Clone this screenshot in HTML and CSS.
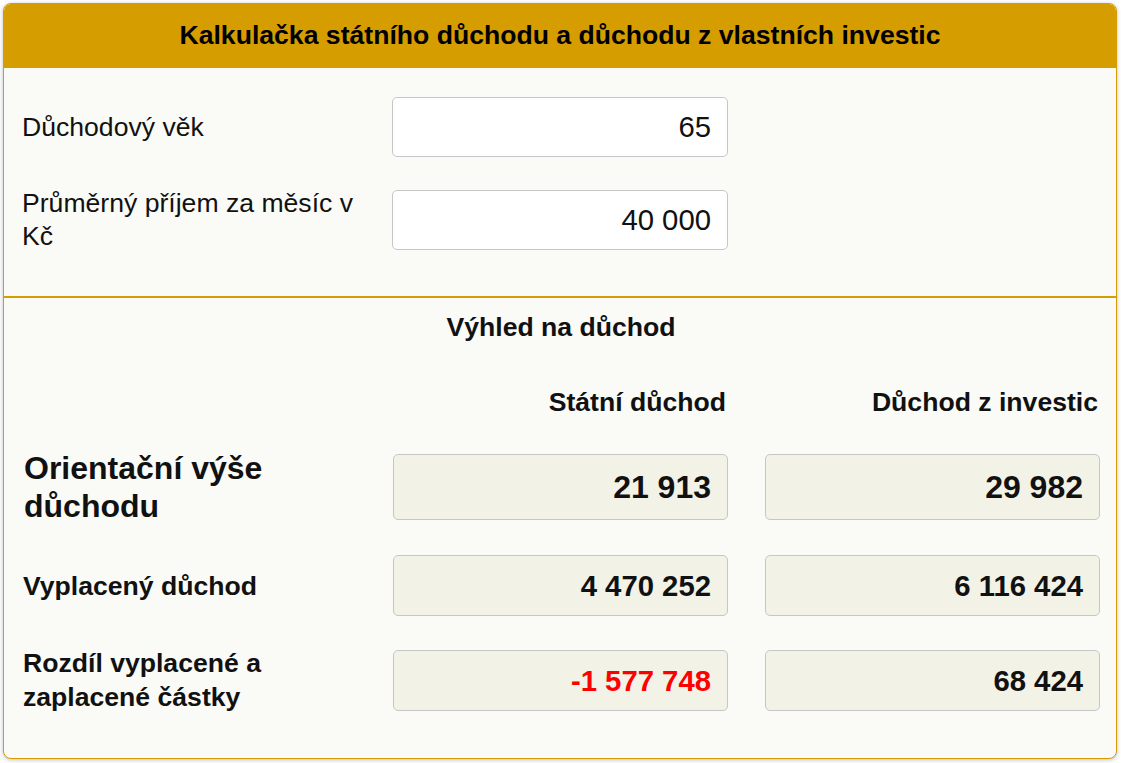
FILE: index.html
```html
<!DOCTYPE html>
<html>
<head>
  <meta charset="utf-8">
  <title>Kalkulačka důchodu</title>
  <link rel="stylesheet" href="styles.css">
</head>
<body>
  <div class="calc">
    <div class="calc-head">Kalkulačka státního důchodu a důchodu z vlastních investic</div>

    <div class="inputs">
      <label class="lbl" for="age">Důchodový věk</label>
      <input class="field" id="age" type="text" value="65">
      <div></div>
      <label class="lbl" for="income">Průměrný příjem za měsíc v Kč</label>
      <input class="field" id="income" type="text" value="40 000">
      <div></div>
    </div>

    <div class="results">
      <div class="res-title">Výhled na důchod</div>
      <div class="res-grid">
        <div></div>
        <div class="col-head">Státní důchod</div>
        <div class="col-head">Důchod z investic</div>

        <div class="row-lbl big">Orientační výše důchodu</div>
        <div class="val big">21 913</div>
        <div class="val big">29 982</div>

        <div class="row-lbl">Vyplacený důchod</div>
        <div class="val">4 470 252</div>
        <div class="val">6 116 424</div>

        <div class="row-lbl">Rozdíl vyplacené a zaplacené částky</div>
        <div class="val neg">-1 577 748</div>
        <div class="val">68 424</div>
      </div>
    </div>
  </div>
</body>
</html>
```

FILE: styles.css
```css
body {
  margin: 0; background: #fff;
  font-family: 'Liberation Sans', Arial, sans-serif;
  color: #111;
}
.calc {
  margin: 3px 4px 4px 3px;
  border: 1px solid #d59d00; border-radius: 8px;
  background: #fafaf6; overflow: hidden;
  box-shadow: 0 1px 4px rgba(0, 0, 0, 0.25);
}
.calc-head {
  background: #d59d00; color: #000;
  font-size: 26.6px; font-weight: bold; line-height: 33px;
  text-align: center;
  padding: 15px 0 16px;
}
.inputs {
  display: grid; grid-template-columns: minmax(0, 1fr) 336px 335px;
  column-gap: 37px; row-gap: 30px; align-items: center;
  padding: 29px 16px 43px 18px;
  border-bottom: 2px solid #d59d00;
}
.lbl {
  font-size: 26.6px; line-height: 33px;
}
.field {
  box-sizing: border-box; width: 100%; min-width: 0; height: 60px;
  border: 1px solid #c6c6c6; border-radius: 5px;
  background: #fff; color: #111;
  font-family: inherit; font-size: 29.3px;
  text-align: right; padding: 0 16px;
}
.results {
  padding: 13px 16px 44px 18px;
}
.res-title {
  text-align: center; font-weight: bold;
  font-size: 26.6px; line-height: 33px;
  margin-bottom: 42px;
}
.res-grid {
  display: grid; grid-template-columns: minmax(0, 1fr) 335px 335px;
  column-gap: 37px; row-gap: 30px; align-items: center;
}
.col-head {
  text-align: right; font-weight: bold;
  font-size: 26.6px; line-height: 33px;
  padding-right: 2px;
}
.row-lbl {
  font-weight: bold; font-size: 26.6px; line-height: 34px;
  padding-left: 1px;
}
.row-lbl.big {
  font-size: 32px; line-height: 38px; padding-left: 2px;
}
.val {
  box-sizing: border-box; height: 61px;
  border: 1px solid #c6c6c6; border-radius: 5px;
  background: #f2f2e7;
  font-weight: bold; font-size: 29.3px; line-height: 59px;
  text-align: right; padding-right: 16px;
}
.val.big {
  height: 66px; line-height: 64px; font-size: 32px;
}
.val.neg {
  color: #ff0000;
}
```
